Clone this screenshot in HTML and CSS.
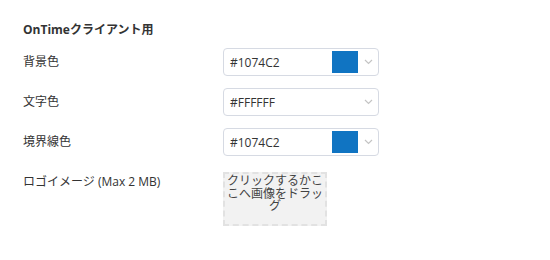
FILE: index.html
```html
<!DOCTYPE html>
<html lang="ja">
<head>
<meta charset="utf-8">
<link rel="stylesheet" href="styles.css">
</head>
<body>
<div class="panel">
  <div class="title">OnTimeクライアント用</div>
  <div class="row">
    <div class="label">背景色</div>
    <div class="field">
      <span class="value">#1074C2</span>
      <span class="swatch"></span>
      <svg class="chev" width="9" height="6" viewBox="0 0 9 6"><path d="M1 1 L4.5 4.5 L8 1" fill="none" stroke="#c4c4c4" stroke-width="1.2"/></svg>
    </div>
  </div>
  <div class="row">
    <div class="label">文字色</div>
    <div class="field">
      <span class="value">#FFFFFF</span>
      <svg class="chev" width="9" height="6" viewBox="0 0 9 6"><path d="M1 1 L4.5 4.5 L8 1" fill="none" stroke="#c4c4c4" stroke-width="1.2"/></svg>
    </div>
  </div>
  <div class="row">
    <div class="label">境界線色</div>
    <div class="field">
      <span class="value">#1074C2</span>
      <span class="swatch"></span>
      <svg class="chev" width="9" height="6" viewBox="0 0 9 6"><path d="M1 1 L4.5 4.5 L8 1" fill="none" stroke="#c4c4c4" stroke-width="1.2"/></svg>
    </div>
  </div>
  <div class="row row-top">
    <div class="label label-top">ロゴイメージ (Max 2 MB)</div>
    <div class="drop">クリックするかここへ画像をドラッグ</div>
  </div>
</div>
</body>
</html>
```
FILE: styles.css
```css
html, body {
  margin: 0;
  padding: 0;
  background: #ffffff;
}
body {
  font-family: "Open Sans", "Noto Sans CJK JP", sans-serif;
  font-size: 12px;
  color: #333333;
}
.panel {
  padding: 22px 0 0 23px;
}
.title {
  font-weight: 700;
  font-size: 12px;
  line-height: 16px;
  margin-bottom: 10px;
}
.row {
  display: flex;
  align-items: center;
  height: 28px;
  margin-bottom: 12px;
}
.label {
  width: 200px;
  line-height: 16px;
}
.field {
  box-sizing: border-box;
  width: 156px;
  height: 28px;
  border: 1px solid #d6dae3;
  border-radius: 4px;
  display: flex;
  align-items: center;
  padding: 0 5px 0 6px;
}
.value {
  flex: 1;
}
.swatch {
  width: 26px;
  height: 22px;
  background: #1074c2;
  margin-right: 6px;
}
.chev {
  display: block;
}
.row-top {
  align-items: flex-start;
  height: auto;
  margin-top: 16px;
}
.label-top {
  padding-top: 2px;
}
.drop {
  box-sizing: border-box;
  width: 104px;
  height: 54px;
  background: #f2f2f2;
  border: 2px dashed #e2e2e2;
  color: #444444;
  font-size: 12px;
  line-height: 12.5px;
  text-align: center;
  padding-top: 1px;
  overflow: hidden;
}
```
